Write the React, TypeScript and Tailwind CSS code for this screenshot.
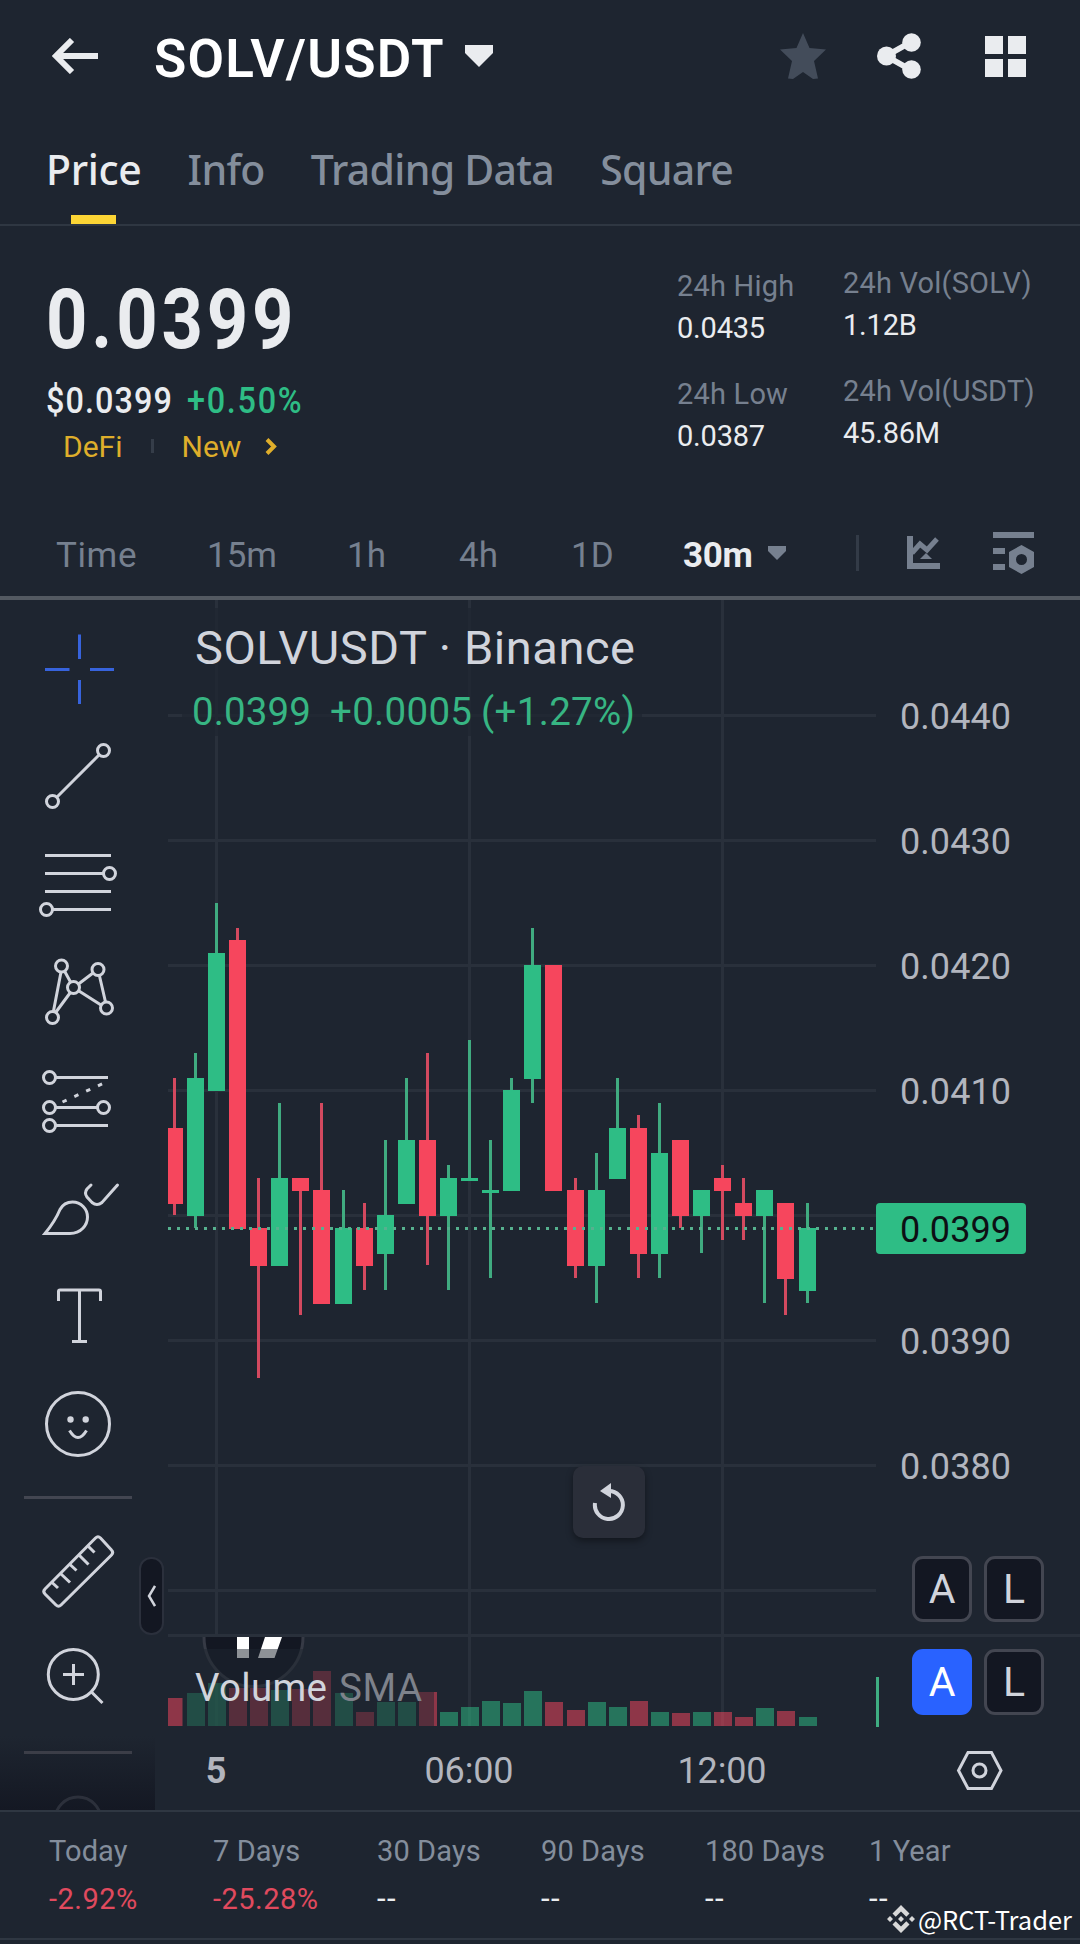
import type { ReactNode } from 'react'

type Candle = {
  open: number
  close: number
  high: number
  low: number
  /** Height of the volume bar in px. */
  volume: number
}

const UP = '#2ebd85'
const DOWN = '#f6465d'

// Prices are in ticks of 0.0001, as [open, close, high, low, volume]
const rawCandles: [number, number, number, number, number][] = [
  [407, 401, 411, 400, 28],
  [400, 411, 413, 399, 33],
  [410, 421, 425, 410, 43],
  [422, 399, 423, 399, 38],
  [399, 396, 403, 387, 38],
  [396, 403, 409, 396, 36],
  [403, 402, 403, 392, 37],
  [402, 393, 409, 393, 55],
  [393, 399, 402, 393, 33],
  [399, 396, 401, 394, 14],
  [397, 400, 406, 394, 24],
  [401, 406, 411, 401, 24],
  [406, 400, 413, 396, 34],
  [400, 403, 404, 394, 14],
  [403, 403, 414, 403, 19],
  [402, 402, 406, 395, 25],
  [402, 410, 411, 402, 23],
  [411, 420, 423, 409, 35],
  [420, 402, 420, 402, 24],
  [402, 396, 403, 395, 16],
  [396, 402, 405, 393, 24],
  [403, 407, 411, 403, 19],
  [407, 397, 408, 395, 25],
  [397, 405, 409, 395, 14],
  [406, 400, 406, 399, 13],
  [400, 402, 402, 397, 14],
  [403, 402, 404, 398, 14],
  [401, 400, 403, 398, 9],
  [400, 402, 402, 393, 18],
  [401, 395, 401, 392, 15],
  [394, 399, 401, 393, 9]
]

const candles: Candle[] = rawCandles.map(
  ([open, close, high, low, volume]) => ({ open, close, high, low, volume })
)

const tabs = ['Price', 'Info', 'Trading Data', 'Square']

const performance = [
  { label: 'Today', value: '-2.92%' },
  { label: '7 Days', value: '-25.28%' },
  { label: '30 Days', value: '--' },
  { label: '90 Days', value: '--' },
  { label: '180 Days', value: '--' },
  { label: '1 Year', value: '--' }
]

function priceY(tick: number) {
  return 965.5 + (420 - tick) * 12.5
}

function candleX(index: number) {
  return Math.floor(166.31 + index * 21.09)
}

function Header() {
  return (
    <header className="flex h-[112px] items-center pl-[52px] pr-[54px]">
      <svg width="46" height="36" viewBox="0 0 46 36" fill="none" stroke="#eaecef" strokeWidth="6">
        <path d="M46 18H5M20 2L4 18l16 16" />
      </svg>
      <h1 className="ml-[56px] mt-[5px] w-[291px] whitespace-nowrap text-[53px] font-semibold leading-[60px] tracking-[1.2px] text-white">
        SOLV/USDT
      </h1>
      <svg className="ml-5" width="28" height="22" viewBox="0 0 28 22" fill="#eaecef">
        <path d="M0 0h28v8L14 22 0 8z" />
      </svg>
      <svg className="ml-auto" width="46" height="46" viewBox="0 0 46 46" fill="#434c5a">
        <path d="M23 0l6.500 15L46 16.500 34 28l4 17.500-5 .5-10-7-10 7-5-.5L12 28 0 16.500 16.500 15z" />
      </svg>
      <svg className="ml-[51px]" width="44" height="46" viewBox="0 0 44 46" fill="#eaecef">
        <path d="M9 23L34 9M9 23l25 14" stroke="#eaecef" strokeWidth="6" />
        <circle cx="9.500" cy="23" r="9.500" />
        <circle cx="34.500" cy="9.500" r="9.300" />
        <circle cx="34.500" cy="36.500" r="9.300" />
      </svg>
      <svg className="ml-16" width="41" height="41" viewBox="0 0 41 41" fill="#eaecef">
        <path d="M0 0h18v18H0zM23 0h18v18H23zM0 23h18v18H0zM23 23h18v18H23z" />
      </svg>
    </header>
  )
}

function Tabs() {
  return (
    <nav className="flex h-[114px] gap-[46px] border-b-2 border-[#2f3742] pl-[46px] font-['Noto_Sans','Roboto',sans-serif] text-[41px] font-medium leading-[115px]">
      {tabs.map((tab, i) => (
        <div
          key={tab}
          className={
            i === 0
              ? 'relative h-[112px] -tracking-[0.3px] text-[#eaecef]'
              : 'h-[112px] -tracking-[0.7px] text-[#848e9c]'
          }
        >
          {tab}
          {i === 0 && (
            <span className="absolute bottom-0 left-[25px] h-[9px] w-[45px] bg-[#fcd535]" />
          )}
        </div>
      ))}
    </nav>
  )
}

function Stat({ label, value }: { label: string; value: string }) {
  return (
    <div className="h-[108px] whitespace-nowrap">
      <div className="text-[29px] leading-[42px] tracking-[0.2px] text-[#76808f]">{label}</div>
      <div className="text-[29px] leading-[42px] -tracking-[0.2px] text-[#eaecef]">{value}</div>
    </div>
  )
}

function Summary() {
  return (
    <section className="flex h-[294px]">
      <div className="w-[677px] pl-[46px]">
        <div className="mt-[45px] h-[98px] origin-left scale-x-86 text-[84px] font-bold leading-[98px] tracking-[4.5px] text-[#eaecef]">
          0.0399
        </div>
        <div className="mt-[10px] flex h-[44px] gap-[15px] text-[36px] font-medium leading-[44px]">
          <span className="w-[126px] origin-left scale-x-90 tracking-[1.2px] text-[#eaecef]">
            $0.0399
          </span>
          <span className="origin-left scale-x-90 tracking-[1.9px] text-[#2ebd85]">+0.50%</span>
        </div>
        <div className="flex h-[46px] items-center pl-[17px] text-[30px] text-[#dfae2b]">
          <span>DeFi</span>
          <span className="ml-[29px] h-[14px] w-[3px] bg-[#353d49]" />
          <span className="ml-[27px]">New</span>
          <svg className="ml-[24px]" width="12" height="17" viewBox="0 0 12 17" fill="none" stroke="#dfae2b" strokeWidth="4">
            <path d="M2 1.500l7 7-7 7" />
          </svg>
        </div>
      </div>
      <div className="w-[166px] pt-[39px]">
        <Stat label="24h High" value="0.0435" />
        <Stat label="24h Low" value="0.0387" />
      </div>
      <div className="pt-[36px]">
        <Stat label="24h Vol(SOLV)" value="1.12B" />
        <Stat label="24h Vol(USDT)" value="45.86M" />
      </div>
    </section>
  )
}

function Intervals() {
  return (
    <div className="flex h-[80px] items-center border-b-4 border-[#535961] pb-[4px] pl-[56px] pr-[46px] text-[35px] text-[#76808f]">
      <span className="w-[151px] tracking-[0.6px]">Time</span>
      <span className="w-[140px]">15m</span>
      <span className="w-[112px]">1h</span>
      <span className="w-[112px]">4h</span>
      <span className="w-[112px]">1D</span>
      <span className="w-[85px] font-bold -tracking-[0.3px] text-[#eaecef]">30m</span>
      <svg className="-mt-[7px]" width="18" height="14" viewBox="0 0 18 14" fill="#76808f">
        <path d="M0 0h18v5l-9 9-9-9z" />
      </svg>
      <span className="-mt-[7px] ml-[70px] h-9 w-[3px] bg-[#333b47]" />
      <svg className="-mt-[8px] ml-[48px]" width="33" height="33" viewBox="0 0 33 33" fill="#76808f">
        <path d="M0 0h6v27h27v6H0z" />
        <path d="M5 17l8-9 7 6L30 3" fill="none" stroke="#76808f" strokeWidth="5" />
        <path d="M13 23l6-6 6 6z" />
      </svg>
      <svg className="-mt-[7px] ml-auto" width="41" height="43" viewBox="0 0 41 43" fill="#76808f">
        <path d="M0 1h41v6H0zM0 17h12v6H0zM0 33h12v6H0z" />
        <path fillRule="evenodd" d="M28.500 14L41 21v15l-12.500 7L16 36V21zM28.500 23a5.500 5.500 0 1 0 0 11 5.500 5.500 0 0 0 0-11z" />
      </svg>
    </div>
  )
}

function Tool({ children }: { children: ReactNode }) {
  return (
    <svg
      className="shrink-0"
      width="155"
      height="108"
      viewBox="0 0 155 108"
      fill="none"
      stroke="#d1d4dc"
      strokeWidth="3"
    >
      {children}
    </svg>
  )
}

/** Drawing tools column on the left of the chart. */
function Toolbar() {
  return (
    <aside className="flex w-[155px] flex-col overflow-hidden pt-[15px]">
      <Tool>
        <path d="M79.500 19.500V44M79.500 65v24M45 54.500h24.500M90 54.500h24" stroke="#3763dc" />
      </Tool>
      <Tool>
        <path d="M57 74L99 32" />
        <circle cx="52.500" cy="78.500" r="6" />
        <circle cx="103.500" cy="27.500" r="6" />
      </Tool>
      <Tool>
        <path d="M45 24.500h66M45 42.500h58M45 60.500h66M53 78.500h58" />
        <circle cx="109.500" cy="42.500" r="6" />
        <circle cx="46.500" cy="78.500" r="6" />
      </Tool>
      <Tool>
        <path d="M61 33l-7.500 39M64.500 32l6 11M78.500 45L93 34M99.500 37l6 26M79 52l22 14M70 54L56 73" />
        <circle cx="61.500" cy="27" r="6" />
        <circle cx="98" cy="30.500" r="6" />
        <circle cx="73.500" cy="48.500" r="6" />
        <circle cx="52.500" cy="78.500" r="6" />
        <circle cx="106.500" cy="69" r="6" />
      </Tool>
      <Tool>
        <path d="M56 30.500h52M56 60.500h41M56 78.500h52" />
        <path d="M62.500 55L104 36" strokeDasharray="4.500 8.500" />
        <circle cx="49.500" cy="30.500" r="6" />
        <circle cx="49.500" cy="60.500" r="6" />
        <circle cx="103.500" cy="60.500" r="6" />
        <circle cx="49.500" cy="78.500" r="6" />
      </Tool>
      <Tool>
        <path d="M45 78.500C52 70 56 64 60 54.500c3-5.500 7-7.500 12.500-7.500C81 47 87.500 54 87.500 62S81 78.500 70 78.500z" />
        <path d="M91 30l-4 4q-3 4 0 8l5 5.500q5 4 10 0L117.500 30" strokeLinecap="round" />
      </Tool>
      <Tool>
        <path d="M58.500 38V28.500q0-1.500 1.500-1.500h39q1.500 0 1.500 1.500V38M79.500 27v51M72 78.500h15" />
      </Tool>
      <Tool>
        <circle cx="78" cy="53" r="31.500" />
        <circle cx="70.500" cy="48.500" r="3.200" fill="#d1d4dc" stroke="none" />
        <circle cx="85.700" cy="48.500" r="3.200" fill="#d1d4dc" stroke="none" />
        <path d="M69.500 59.500q8.500 14 17 0" />
      </Tool>
      <div className="ml-6 mt-[17px] h-[3px] w-[108px] shrink-0 bg-[#434651]" />
      <div className="mt-[18px] flex flex-col">
        <Tool>
          <path d="M95.500 21q2.500-2.500 5 0l11 12q2.500 2.500 0 5L61 88q-2.500 2.500-5 0L45 77q-2.500-2.500 0-5z" />
          <path d="M51.500 65l6.500 6M60.500 56.500l9.500 9M70 47.500l6.500 6M79.500 38.500l9 9M88.500 29.500l6 6" />
        </Tool>
      </div>
      <Tool>
        <circle cx="73.300" cy="49.500" r="25" />
        <path d="M91.500 67l11 11M63 49.500h21M73.500 39v21" />
      </Tool>
      <div className="mt-[3px] flex flex-1 flex-col bg-linear-to-b from-[#1e2530] to-[#141823]">
        <div className="ml-6 mt-[15px] h-[3px] w-[108px] shrink-0 bg-[#3c3e48]" />
        <svg className="mt-auto" width="155" height="16" viewBox="0 0 155 16" fill="none" stroke="#2c303b" strokeWidth="3">
          <circle cx="78" cy="26" r="23" />
        </svg>
      </div>
    </aside>
  )
}

function Chart() {
  return (
    <svg
      width="925"
      height="1210"
      viewBox="155 600 925 1210"
      fontFamily="Roboto, sans-serif"
    >
      <g fill="#29303b">
        {[440, 430, 420, 410, 400, 390, 380, 370].map(p => (
          <rect key={p} x="168" y={Math.round(priceY(p)) - 2} width="708" height="3" />
        ))}
        {[216, 469, 722].map(x => (
          <rect key={x} x={x - 1} y="600" width="3" height="1126" />
        ))}
        <rect x="168" y="1634" width="912" height="3" />
      </g>

      {/* volume pane */}
      {candles.map((c, i) => {
        const x = Math.max(168, candleX(i))
        return (
          <rect
            key={i}
            x={x}
            y={1726 - c.volume}
            width={candleX(i) + 18 - x - (i === 0 ? 1 : 0)}
            height={c.volume}
            fill={c.close >= c.open ? UP : DOWN}
            opacity="0.52"
          />
        )
      })}
      <path d="M203.500 1637a50 50 0 0 0 100 0z" fill="#131722" />
      <path d="M204 1637a49.500 49.500 0 0 0 99 0" fill="none" stroke="#363a45" strokeWidth="3" />
      <path d="M237 1637h12V1658h-12zM265 1637h17l-7.500 21H258z" fill="#fff" />
      <rect x="182" y="1649" width="252" height="77" fill="#1e2530" opacity="0.5" />
      <rect x="876" y="1677" width="3" height="50" fill="#3fae82" />
      <text x="195" y="1701" fontSize="38.500" fill="#d1d4dc" textLength="132">Volume</text>
      <text x="339" y="1701" fontSize="38.500" fill="#7e828b" textLength="83">SMA</text>

      {/* candles */}
      {candles.map((c, i) => {
        const up = c.close >= c.open
        const x = candleX(i)
        const left = Math.max(168, x)
        const top = Math.floor(priceY(Math.max(c.open, c.close)))
        const bottom = Math.floor(priceY(Math.min(c.open, c.close)) + 1)
        const wickTop = Math.floor(priceY(c.high))
        return (
          <g key={i}>
            <rect
              x={x + 7}
              y={wickTop}
              width="3"
              height={Math.floor(priceY(c.low)) - wickTop}
              fill={up ? '#40ab80' : '#d3495f'}
            />
            <rect
              x={left}
              y={top}
              width={x + 17 - left}
              height={Math.max(3, bottom - top)}
              fill={up ? UP : DOWN}
            />
          </g>
        )
      })}
      <path d="M168 1228.500H876" stroke="#56b18f" strokeWidth="3" strokeDasharray="3 6" />

      {/* price scale */}
      <g fontSize="36" fill="#b2b5be">
        {[440, 430, 420, 410, 390, 380].map(p => (
          <text key={p} x="900" y={priceY(p) + 13} textLength="111">{`0.0${p}`}</text>
        ))}
      </g>
      <rect x="876" y="1203" width="150" height="51" rx="4" fill={UP} />
      <text x="900" y="1242" fontSize="36" fill="#0d0f14" textLength="111">0.0399</text>

      {/* legend */}
      <rect x="182" y="608" width="460" height="128" fill="#1e2530" opacity="0.7" />
      <text x="195" y="663.500" fontSize="47" fill="#d1d4dc" textLength="440">SOLVUSDT · Binance</text>
      <g fontSize="38.500" fill="#37b583">
        <text x="192" y="725" textLength="119">0.0399</text>
        <text x="330" y="725" textLength="142">+0.0005</text>
        <text x="481" y="725" textLength="154">(+1.27%)</text>
      </g>

      {/* time scale */}
      <g fontSize="36" fill="#b2b5be" textAnchor="middle">
        <text x="216" y="1783" fontWeight="700">5</text>
        <text x="469" y="1783" textLength="89">06:00</text>
        <text x="722" y="1783" textLength="89">12:00</text>
      </g>
      <path d="M968 1752.500h23.500l9.500 18-9.500 18H968l-9.500-18z" fill="none" stroke="#d1d4dc" strokeWidth="3" />
      <circle cx="979.500" cy="1770.500" r="6.500" fill="none" stroke="#d1d4dc" strokeWidth="3" />
    </svg>
  )
}

function ScaleButton({ children, active }: { children: string; active?: boolean }) {
  return (
    <button
      className={
        active
          ? 'h-[66px] w-[60px] rounded-[11px] bg-[#2962ff] text-[41px] leading-[62px] text-white'
          : 'h-[66px] w-[60px] rounded-[11px] border-3 border-[#434651] bg-[#131722] text-[41px] leading-[56px] text-[#d1d4dc]'
      }
    >
      {children}
    </button>
  )
}

function ChartPanel() {
  return (
    <main className="relative flex h-[1210px]">
      <Toolbar />
      <Chart />
      <button className="absolute left-[139px] top-[957px] flex h-[78px] w-[25px] items-center justify-center rounded-[12px] border-2 border-[#2b303c] bg-[#131722]">
        <svg width="9" height="22" viewBox="0 0 9 22" fill="none" stroke="#d1d4dc" strokeWidth="2.500">
          <path d="M8 1L2 11l6 10" />
        </svg>
      </button>
      <button className="absolute left-[573px] top-[866px] flex h-[72px] w-[72px] items-center justify-center rounded-[10px] bg-[#2a2e39] shadow-[0_3px_7px_rgba(0,0,0,0.4)]">
        <svg width="34" height="38" viewBox="0 0 34 38" fill="none" stroke="#d1d4dc" strokeWidth="4">
          <path d="M3 20a14 14 0 1 0 14-12" />
          <path d="M8 8L19 0v15z" fill="#d1d4dc" stroke="none" />
        </svg>
      </button>
      <div className="absolute left-[912px] top-[956px] grid grid-cols-2 gap-x-3 gap-y-[27px]">
        <ScaleButton>A</ScaleButton>
        <ScaleButton>L</ScaleButton>
        <ScaleButton active>A</ScaleButton>
        <ScaleButton>L</ScaleButton>
      </div>
    </main>
  )
}

function Performance() {
  return (
    <footer className="relative h-[134px] border-t-2 border-[#2f3742]">
      <div className="grid h-[128px] grid-cols-[repeat(6,164px)] border-b-2 border-[#2f3742] pl-[49px] pt-[18px]">
        {performance.map(({ label, value }) => (
          <div key={label} className="whitespace-nowrap">
            <div className="text-[29px] leading-[42px] tracking-[0.1px] text-[#848e9c]">{label}</div>
            <div
              className={
                value === '--'
                  ? 'mt-[6px] text-[31px] leading-[42px] tracking-[1.500px] text-[#eaecef]'
                  : 'mt-[6px] text-[29px] leading-[42px] tracking-[0.5px] text-[#e04a5e]'
              }
            >
              {value}
            </div>
          </div>
        ))}
      </div>
      <div className="absolute bottom-[10px] right-[8px] flex items-center gap-[3px] font-['Noto_Sans_CJK_SC',sans-serif] text-[25.500px] leading-[30px] text-white">
        <svg width="28" height="28" viewBox="0 0 28 28" fill="#d8d8d8">
          <path d="M14 0l8.500 8.500-3.200 3.200L14 6.400l-5.300 5.300-3.200-3.200zM14 28l8.500-8.500-3.200-3.200-5.300 5.300-5.300-5.300-3.200 3.200zM14 11l3 3-3 3-3-3zM3 11l3 3-3 3-3-3zM25 11l3 3-3 3-3-3z" />
        </svg>
        @RCT-Trader
      </div>
    </footer>
  )
}

export default function App() {
  return (
    <div className="h-[1944px] w-[1080px] overflow-hidden bg-[#1e2530] font-['Roboto',sans-serif]">
      <Header />
      <Tabs />
      <Summary />
      <Intervals />
      <ChartPanel />
      <Performance />
    </div>
  )
}
